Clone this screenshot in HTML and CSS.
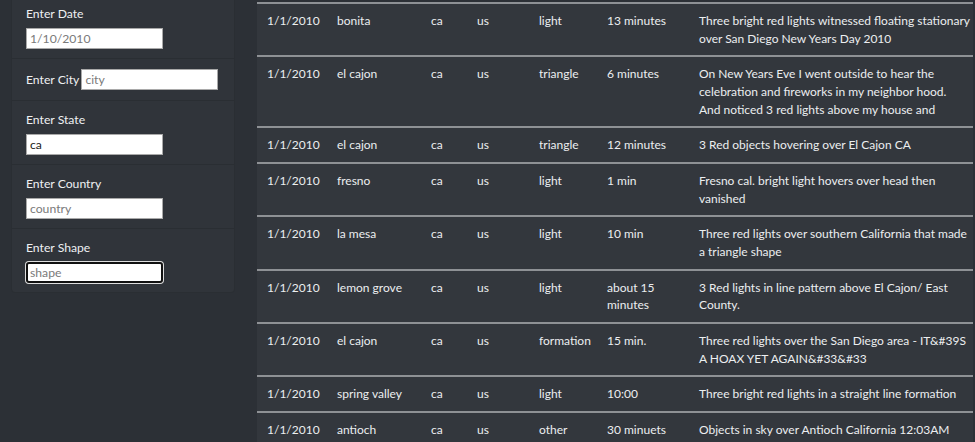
FILE: index.html
```html
<!DOCTYPE html>
<html>
<head>
<meta charset="utf-8">
<link rel="stylesheet" href="styles.css">
</head>
<body>
<div class="page">
  <aside class="filters">
    <div class="filter first">
      <label class="label block">Enter Date</label>
      <input class="field" type="text" placeholder="1/10/2010">
    </div>
    <div class="filter inline">
      <label class="label">Enter City</label>
      <input class="field" type="text" placeholder="city">
    </div>
    <div class="filter">
      <label class="label block">Enter State</label>
      <input class="field" type="text" value="ca">
    </div>
    <div class="filter">
      <label class="label block">Enter Country</label>
      <input class="field" type="text" placeholder="country">
    </div>
    <div class="filter">
      <label class="label block">Enter Shape</label>
      <input class="field focused" type="text" placeholder="shape">
    </div>
  </aside>
  <main class="results">
    <table class="ufo">
      <colgroup>
        <col class="c-date"><col class="c-city"><col class="c-state"><col class="c-country"><col class="c-shape"><col class="c-dur"><col class="c-comment">
      </colgroup>
      <tbody>
        <tr><td>1/1/2010</td><td>bonita</td><td>ca</td><td>us</td><td>light</td><td>13 minutes</td><td>Three bright red lights witnessed floating stationary over San Diego New Years Day 2010</td></tr>
        <tr><td>1/1/2010</td><td>el cajon</td><td>ca</td><td>us</td><td>triangle</td><td>6 minutes</td><td>On New Years Eve I went outside to hear the celebration and fireworks in my neighbor hood.<br>And noticed 3 red lights above my house and</td></tr>
        <tr><td>1/1/2010</td><td>el cajon</td><td>ca</td><td>us</td><td>triangle</td><td>12 minutes</td><td>3 Red objects hovering over El Cajon CA</td></tr>
        <tr><td>1/1/2010</td><td>fresno</td><td>ca</td><td>us</td><td>light</td><td>1 min</td><td>Fresno cal. bright light hovers over head then vanished</td></tr>
        <tr><td>1/1/2010</td><td>la mesa</td><td>ca</td><td>us</td><td>light</td><td>10 min</td><td>Three red lights over southern California that made a triangle shape</td></tr>
        <tr><td>1/1/2010</td><td>lemon grove</td><td>ca</td><td>us</td><td>light</td><td>about 15 minutes</td><td>3 Red lights in line pattern above El Cajon/ East County.</td></tr>
        <tr><td>1/1/2010</td><td>el cajon</td><td>ca</td><td>us</td><td>formation</td><td>15 min.</td><td>Three red lights over the San Diego area - IT&amp;#39S A HOAX YET AGAIN&amp;#33&amp;#33</td></tr>
        <tr><td>1/1/2010</td><td>spring valley</td><td>ca</td><td>us</td><td>light</td><td>10:00</td><td>Three bright red lights in a straight line formation</td></tr>
        <tr><td>1/1/2010</td><td>antioch</td><td>ca</td><td>us</td><td>other</td><td>30 minuets</td><td>Objects in sky over Antioch California 12:03AM</td></tr>
      </tbody>
    </table>
  </main>
</div>
</body>
</html>
```
FILE: styles.css
```css
html, body {
  margin: 0;
  padding: 0;
  background: #2c3036;
  height: 100%;
  overflow: hidden;
}
body {
  font-family: "Lato", "Liberation Sans", sans-serif;
  font-size: 12px;
  color: #e9ecef;
}
.page {
  display: flex;
  align-items: flex-start;
}
.filters {
  width: 222px;
  margin-left: 11px;
  margin-top: -6px;
  background: #30343a;
  border: 1px solid #2a2e33;
  border-radius: 0 0 4px 4px;
  flex: none;
}
.filter {
  padding: 10px 14px 9px;
  border-top: 1px solid #2a2e33;
}
.filter.first {
  border-top: none;
}
.filter.inline {
  padding: 10px 14px 10px;
  display: flex;
  align-items: center;
  gap: 2px;
}
.label {
  line-height: 18px;
  color: #eef0f2;
  font-size: 12.2px;
  white-space: nowrap;
}
.label.block {
  display: block;
  margin-bottom: 5px;
}
.field {
  box-sizing: border-box;
  width: 137px;
  height: 21px;
  margin: 0;
  padding: 1px 3px;
  border: 1px solid #a9a9a9;
  background: #fff;
  font-family: inherit;
  font-size: 12.2px;
  color: #222;
  outline: none;
  display: block;
  flex: none;
}
.field::placeholder {
  color: #7a7a7a;
}
.field.focused {
  border: 2px solid #111;
  border-radius: 3px;
  box-shadow: 0 0 0 1px #ddd;
  padding: 0 2px;
}
.results {
  margin-left: 22px;
  margin-top: 2px;
  flex: 1;
  margin-right: 2px;
}
.ufo {
  width: 100%;
  border-collapse: collapse;
  table-layout: fixed;
  background: #33373d;
}
.c-date { width: 70px; }
.c-city { width: 94px; }
.c-state { width: 46px; }
.c-country { width: 62px; }
.c-shape { width: 68px; }
.c-dur { width: 92px; }
.ufo td {
  padding: 8px 10px;
  line-height: 17.65px;
  vertical-align: top;
  border-top: 2px solid #8e9195;
  color: #eceef0;
}
.ufo td:last-child {
  padding-right: 1px;
}
```
